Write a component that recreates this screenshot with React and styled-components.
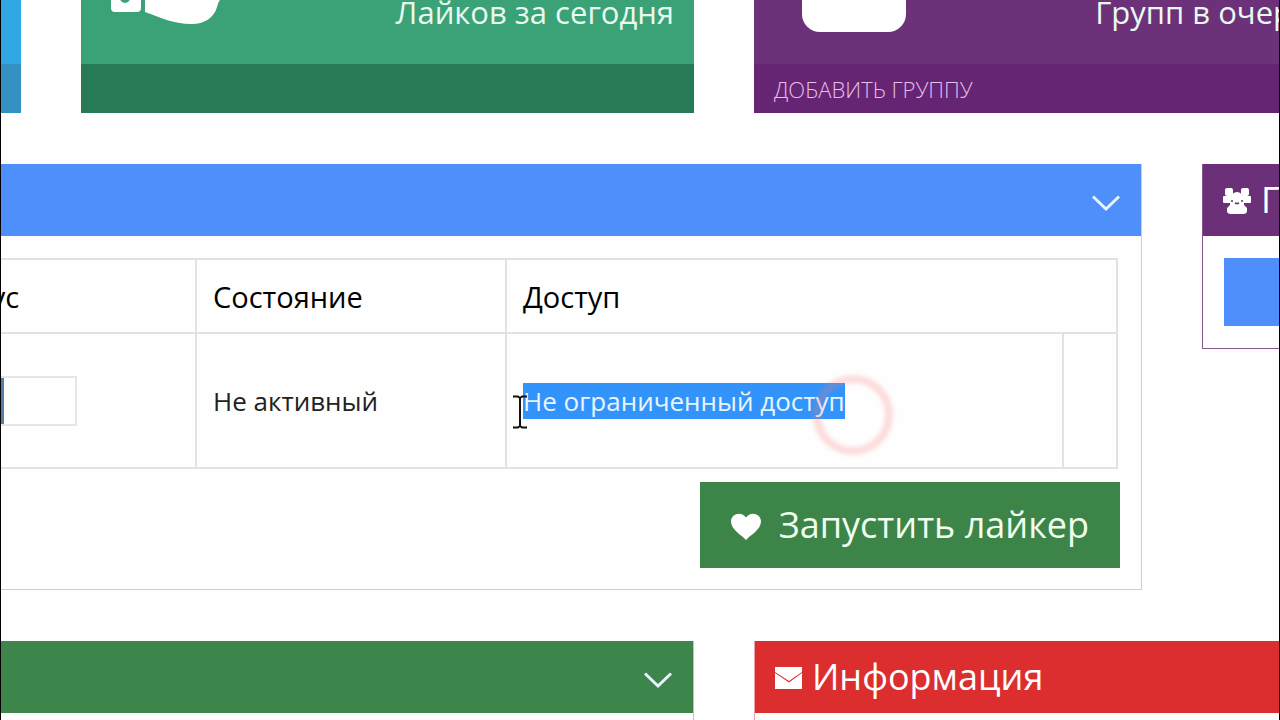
import React from 'react';
import styled, { createGlobalStyle } from 'styled-components';

function ThumbIcon() {
  return (
    <Thumb viewBox="0 0 110 120" fill="#fff" aria-hidden="true">
      <path
        fillRule="evenodd"
        d="M0 44h30v58q0 4-4 4H4q-4 0-4-4zM14 87a5 5 0 1 0 0 10 5 5 0 0 0 0-10z"
      />
      <path d="M34 46c8-1 17-15 24-23C64 15 60 0 70 0c14 0 16 16 10 40h22c12 0 12 16 4 18 8 5 5 17 0 19 5 6 6 12 4 16-3 3-3 5-4 8-3 11-13 17-25 17-20 0-32-7-47-12z" />
    </Thumb>
  );
}

function Chevron() {
  return (
    <svg width="30" height="18" viewBox="0 0 30 18" aria-hidden="true">
      <path d="M2 2.5 15 15 28 2.5" fill="none" stroke="#e8f4ff" strokeWidth="3" />
    </svg>
  );
}

function GroupIcon() {
  return (
    <HeaderIcon width="28" height="28" viewBox="1 0 28 28" aria-hidden="true">
      <g fill="#fff">
        <rect x="3" y="1" width="8" height="8" rx="2" />
        <rect x="19" y="1" width="8" height="8" rx="2" />
        <rect x="1" y="9" width="9" height="7" rx="1" />
        <rect x="20" y="9" width="9" height="7" rx="1" />
        <circle cx="15" cy="11" r="6" />
        <path d="M8 14h14v4l3 3v3q0 3-4 3H9q-4 0-4-3v-3l3-3z" />
      </g>
      <path d="M10 13v2M20 13v2M13 16q2 1 4 0" stroke="#6b3077" strokeWidth="1.5" fill="none" />
    </HeaderIcon>
  );
}

function MailIcon() {
  return (
    <HeaderIcon width="27" height="22" viewBox="0 0 27 22" aria-hidden="true">
      <path d="M0 0h27v5L14 14 0 5z" fill="#fff" />
      <path d="M0 6l14 9.5L27 6v16H0z" fill="#fff" />
    </HeaderIcon>
  );
}

function HeartIcon() {
  return (
    <svg width="30" height="27" viewBox="0 0 30 27" fill="#fff" aria-hidden="true">
      <path d="M15 27C12 23 0 17 0 8.5 0 0 11-2 15 4.5 19-2 30 0 30 8.5 30 17 18 23 15 27z" />
    </svg>
  );
}

function TextCursor() {
  return (
    <Cursor width="14" height="34" viewBox="0 0 14 34" aria-hidden="true">
      <path
        d="M0 1.5H5L7 3L9 1.5H14M7 3V31M0 32.5H5L7 31L9 32.5H14"
        fill="none"
        stroke="#111"
        strokeWidth="2"
      />
    </Cursor>
  );
}

export default function App() {
  return (
    <Page>
      <GlobalStyle />
      <Row>
        <Tile $color="#2fa8e4">
          <TileBody />
          <TileFooter $color="#3390c2" />
        </Tile>
        <Tile $color="#3aa276">
          <TileBody>
            <ThumbIcon />
            <TileText>Лайков за сегодня</TileText>
          </TileBody>
          <TileFooter $color="#267a56" />
        </Tile>
        <Tile $color="#6c3178">
          <TileBody>
            <TileBlock />
            <TileText>Групп в очереди</TileText>
          </TileBody>
          <TileFooter $color="#652572">
            <TileLink href="#add">ДОБАВИТЬ ГРУППУ</TileLink>
          </TileFooter>
        </Tile>
      </Row>

      <Row $columns="minmax(0, 1734fr) minmax(0, 165fr)">
        <Panel $border="#bcd0f5">
          <PanelHeader $color="#4f8ff9">
            <Collapse aria-label="Свернуть">
              <Chevron />
            </Collapse>
          </PanelHeader>
          <PanelBody>
            <Table>
              <colgroup>
                <col />
                <col width="310" />
                <col width="557" />
                <col width="54" />
              </colgroup>
              <thead>
                <tr>
                  <th>Статус</th>
                  <th>Состояние</th>
                  <th colSpan={2}>Доступ</th>
                </tr>
              </thead>
              <tbody>
                <tr>
                  <td>
                    <Progress>
                      <ProgressFill />
                    </Progress>
                  </td>
                  <td>Не активный</td>
                  <td>
                    <Selected>
                      Не ограниченный доступ
                      <TextCursor />
                      <ClickRing />
                    </Selected>
                  </td>
                  <td />
                </tr>
              </tbody>
            </Table>
            <StartButton>
              <HeartIcon />
              <ButtonText>Запустить лайкер</ButtonText>
            </StartButton>
          </PanelBody>
        </Panel>
        <Panel $border="#855692">
          <PanelHeader $color="#6b3077">
            <GroupIcon />
            <Title>Группы</Title>
          </PanelHeader>
          <SideBody>
            <SideButton aria-label="Группы" />
          </SideBody>
        </Panel>
      </Row>

      <Row>
        <Panel $border="#a5d3ab" $span={2}>
          <PanelHeader $color="#3d854a">
            <Collapse aria-label="Свернуть">
              <Chevron />
            </Collapse>
          </PanelHeader>
          <PanelBody />
        </Panel>
        <Panel $border="#eaa0a8">
          <PanelHeader $color="#dc2d2f">
            <MailIcon />
            <Title>Информация</Title>
          </PanelHeader>
          <PanelBody />
        </Panel>
      </Row>
    </Page>
  );
}

const GlobalStyle = createGlobalStyle`
  * {
    box-sizing: border-box;
  }

  body {
    margin: 0;
    background: #fefefe;
    font-family: 'Open Sans', 'Noto Sans', sans-serif;
  }
`;

const Page = styled.div`
  height: 100vh;
  display: flex;
  flex-direction: column;
  gap: 51px;
  overflow: hidden;
  border: solid #000;
  border-width: 0 1px;
`;

// the rows are wider than the window on both sides
const Row = styled.div`
  flex: none;
  display: grid;
  grid-template-columns: ${(props) => props.$columns || 'repeat(3, minmax(0, 1fr))'};
  gap: 60px;
  align-items: start;
  margin: 0 -88px 0 -593px;
`;

const Tile = styled.div`
  background: ${(props) => props.$color};
`;

const TileBody = styled.div`
  height: 64px;
  display: flex;
  justify-content: space-between;
  align-items: flex-end;
  padding: 0 20px 32px 30px;
`;

const Thumb = styled.svg`
  flex: none;
  width: 110px;
  height: 120px;
  margin-bottom: 6px;
`;

const TileBlock = styled.div`
  flex: none;
  width: 104px;
  height: 90px;
  margin-left: 18px;
  border-radius: 18px;
  background: #fff;
`;

const TileText = styled.div`
  font-size: 31px;
  line-height: 40px;
  color: #e8faf0;
  white-space: nowrap;
`;

const TileFooter = styled.div`
  height: 49px;
  padding: 0 20px;
  background: ${(props) => props.$color};
`;

const TileLink = styled.a`
  font-size: 22px;
  font-weight: 300;
  line-height: 50px;
  color: #e6bdee;
  text-decoration: none;
`;

const Panel = styled.div`
  grid-column: span ${(props) => props.$span || 1};
  border: 1px solid ${(props) => props.$border};
  border-top: none;
  background: #fefefe;
`;

const PanelHeader = styled.div`
  height: 72px;
  display: flex;
  align-items: center;
  gap: 10px;
  padding: 2px 20px 0;
  background: ${(props) => props.$color};
`;

const HeaderIcon = styled.svg`
  flex: none;
`;

const Title = styled.div`
  padding-bottom: 4px;
  font-size: 36px;
  color: #fff;
`;

const Collapse = styled.button`
  display: flex;
  margin-left: auto;
  padding: 4px 0 0;
  border: none;
  background: none;
`;

const PanelBody = styled.div`
  display: flex;
  flex-direction: column;
  align-items: flex-end;
  padding: 22px 21px 21px;
`;

const Table = styled.table`
  width: 1207px;
  margin-right: 2px;
  border-collapse: collapse;
  table-layout: fixed;
  color: #222;

  th,
  td {
    padding: 0 16px;
    border: 2px solid #e2e2e2;
    text-align: left;
    white-space: nowrap;
  }

  th {
    height: 74px;
    font-size: 29px;
    font-weight: 400;
    color: #000;
  }

  td {
    height: 135px;
    font-size: 26px;
  }
`;

const Progress = styled.div`
  width: 148px;
  height: 50px;
  border: 2px solid #e6e6e6;
`;

const ProgressFill = styled.div`
  width: 51%;
  height: 100%;
  background: #557fa5;
`;

const Selected = styled.span`
  position: relative;
  display: inline-block;
  line-height: 36px;
  color: #e8f4ff;
  background: #3294fb;
`;

const Cursor = styled.svg`
  position: absolute;
  top: 12px;
  left: -10px;
`;

const ClickRing = styled.i`
  position: absolute;
  top: -8px;
  right: -48px;
  width: 80px;
  height: 80px;
  border: 8px solid rgba(250, 120, 120, 0.26);
  border-radius: 50%;
  filter: blur(2px);
`;

const StartButton = styled.button`
  height: 86px;
  display: flex;
  align-items: center;
  gap: 18px;
  margin-top: 13px;
  padding: 2px 31px 0;
  border: none;
  background: #3d8448;
  color: #f0fff0;
  font-family: inherit;
  font-size: 36px;
`;

const ButtonText = styled.span`
  padding-bottom: 4px;
`;

const SideBody = styled.div`
  padding: 22px 21px;
`;

const SideButton = styled.button`
  display: block;
  width: 100%;
  height: 68px;
  border: none;
  background: #4f8ffb;
`;
